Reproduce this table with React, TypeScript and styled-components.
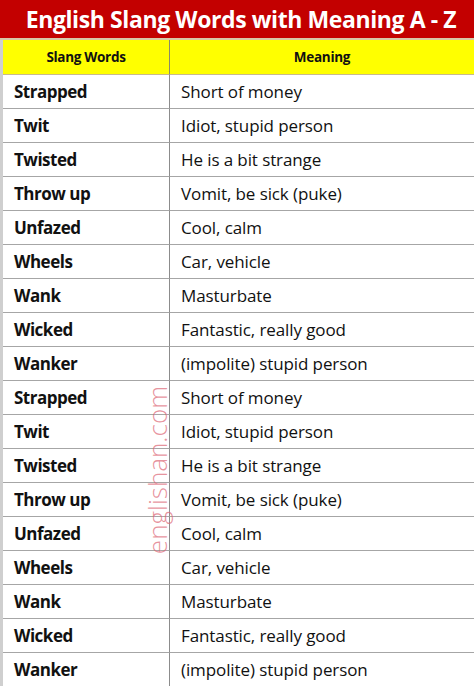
import React from "react";
import styled, { createGlobalStyle } from "styled-components";

type Slang = {
    word: string;
    meaning: string;
};

const words: Slang[] = [
    { word: "Strapped", meaning: "Short of money" },
    { word: "Twit", meaning: "Idiot, stupid person" },
    { word: "Twisted", meaning: "He is a bit strange" },
    { word: "Throw up", meaning: "Vomit, be sick (puke)" },
    { word: "Unfazed", meaning: "Cool, calm" },
    { word: "Wheels", meaning: "Car, vehicle" },
    { word: "Wank", meaning: "Masturbate" },
    { word: "Wicked", meaning: "Fantastic, really good" },
    { word: "Wanker", meaning: "(impolite) stupid person" },
];

const rows = [...words, ...words];

const GlobalStyle = createGlobalStyle`
    html, body {
        margin: 0;
        padding: 0;
        background: #ffffff;
    }
    body {
        width: 474px;
        height: 686px;
        overflow: hidden;
        font-family: "Open Sans", "Noto Sans", sans-serif;
    }
`;

const Page = styled.div`
    position: relative;
    width: 474px;
    height: 686px;
    overflow: hidden;
`;

const Title = styled.h1`
    margin: 0;
    height: 38px;
    padding-left: 8px;
    background: #c30000;
    color: #ffffff;
    font-size: 23px;
    font-weight: 700;
    letter-spacing: -0.4px;
    display: flex;
    align-items: center;
    justify-content: center;
    border-bottom: 2px solid #d8c8a8;
`;

const Table = styled.div`
    display: grid;
    grid-template-columns: 167px 1fr;
    border-left: 3px solid #cfcfcf;
`;

const HeadCell = styled.div<{ $divider?: boolean }>`
    height: 34px;
    background: #ffff00;
    border-bottom: 1px solid #c8b98e;
    border-right: ${(p) => (p.$divider ? "1px solid #8a8a6a" : "none")};
    display: flex;
    align-items: center;
    justify-content: center;
    font-size: 13.5px;
    font-weight: 700;
    letter-spacing: -0.3px;
    color: #111;
`;

const Cell = styled.div<{ $bold?: boolean; $divider?: boolean }>`
    height: 33px;
    border-bottom: 1px solid #a6a6a6;
    border-right: ${(p) => (p.$divider ? "1px solid #8c8c8c" : "none")};
    display: flex;
    align-items: center;
    padding-left: 11px;
    font-size: 17px;
    font-weight: ${(p) => (p.$bold ? 700 : 400)};
    letter-spacing: ${(p) => (p.$bold ? "-0.5px" : "-0.1px")};
    color: #111;
    white-space: nowrap;
`;

const Watermark = styled.div`
    position: absolute;
    left: 157px;
    top: 470px;
    transform: translate(-50%, -50%) rotate(-90deg);
    font-family: "Open Sans", sans-serif;
    font-weight: 300;
    font-size: 26px;
    color: rgba(220, 100, 115, 0.7);
    white-space: nowrap;
    pointer-events: none;
`;

const App = () => {
    return (
        <>
            <GlobalStyle />
            <Page>
                <Title>English Slang Words with Meaning A - Z</Title>
                <Table>
                    <HeadCell $divider>Slang Words</HeadCell>
                    <HeadCell>Meaning</HeadCell>
                    {rows.map((r, i) => (
                        <React.Fragment key={i}>
                            <Cell $bold $divider>{r.word}</Cell>
                            <Cell>{r.meaning}</Cell>
                        </React.Fragment>
                    ))}
                </Table>
                <Watermark>englishan.com</Watermark>
            </Page>
        </>
    );
};

export default App;
